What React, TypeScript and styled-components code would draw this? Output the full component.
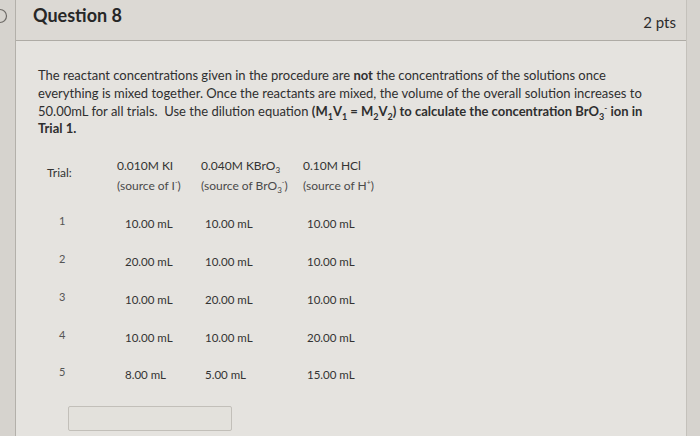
import React from "react";
import styled, { createGlobalStyle } from "styled-components";

const GlobalStyle = createGlobalStyle`
  html, body {
    margin: 0;
    padding: 0;
    background: #d6d3ce;
    font-family: Lato, "Open Sans", sans-serif;
    color: #2e2e2e;
  }
  * {
    box-sizing: border-box;
  }
`;

const Page = styled.div`
  display: flex;
  width: 700px;
  height: 436px;
  overflow: hidden;
`;

const Gutter = styled.div`
  width: 15px;
  flex-shrink: 0;
  padding-top: 8px;
  overflow: hidden;
  svg {
    margin-left: -8px;
    display: block;
  }
`;

const Card = styled.div`
  width: 672px;
  flex-shrink: 0;
  background: #e5e3df;
  border-left: 1px solid #b3b0aa;
  border-right: 1px solid #c4c1bb;
  display: flex;
  flex-direction: column;
`;

const Header = styled.div`
  height: 41px;
  flex-shrink: 0;
  display: flex;
  align-items: center;
  justify-content: space-between;
  padding: 0 10px 0 17px;
  background: #dcd9d4;
  border-bottom: 1px solid #aeaba5;
`;

const Title = styled.h2`
  margin: 0 0 10px;
  font-size: 18px;
  font-weight: 700;
  color: #272727;
`;

const Points = styled.span`
  font-size: 15px;
  margin-top: 4px;
  color: #2c2c2c;
`;

const Body = styled.div`
  flex-shrink: 0;
  padding: 26px 0 0 22px;
`;

const Prompt = styled.p`
  margin: 0;
  width: 620px;
  font-size: 13px;
  line-height: 17.8px;
  color: #2f2f2f;
  sub {
    font-size: 9px;
    line-height: 0;
  }
  sup {
    font-size: 8px;
    line-height: 0;
  }
`;

const Table = styled.div`
  display: grid;
  grid-template-columns: 70px 84px 102px 80px;
  margin: 18px 0 0 9px;
  font-size: 12px;
  color: #333;
  sub {
    font-size: 8px;
    line-height: 0;
  }
  sup {
    font-size: 7px;
    line-height: 0;
  }
`;

const HeadCell = styled.div<{ $top?: number }>`
  line-height: 20px;
  white-space: nowrap;
  padding-top: ${(p) => p.$top ?? 0}px;
`;

const Sub = styled.span`
  display: block;
  line-height: 19px;
  color: #4a4a4a;
`;

const Spacer = styled.div`
  grid-column: 1 / -1;
  height: 19px;
`;

const Cell = styled.div<{ $pad?: number; $num?: boolean }>`
  height: 37.8px;
  line-height: 14px;
  padding-top: ${(p) => (p.$num ? 0 : 3)}px;
  padding-left: ${(p) => p.$pad ?? 0}px;
  font-size: ${(p) => (p.$num ? 11 : 11.5)}px;
  color: ${(p) => (p.$num ? "#555" : "#333")};
  white-space: nowrap;
`;

const AnswerBox = styled.div`
  margin: 3px 0 0 30px;
  width: 164px;
  height: 25px;
  border: 1px solid #c2bfb9;
  border-radius: 2px;
  background: #e3e1dc;
`;

const rows = [
  ["1", "10.00 mL", "10.00 mL", "10.00 mL"],
  ["2", "20.00 mL", "10.00 mL", "10.00 mL"],
  ["3", "10.00 mL", "20.00 mL", "10.00 mL"],
  ["4", "10.00 mL", "10.00 mL", "20.00 mL"],
  ["5", "8.00 mL", "5.00 mL", "15.00 mL"],
];

export default function App() {
  return (
    <>
      <GlobalStyle />
      <Page>
        <Gutter>
          <svg width="16" height="16" viewBox="0 0 16 16">
            <circle cx="8" cy="8" r="6.5" fill="none" stroke="#6d6a66" strokeWidth="1.2" />
          </svg>
        </Gutter>
        <Card>
          <Header>
            <Title>Question 8</Title>
            <Points>2 pts</Points>
          </Header>
          <Body>
            <Prompt>
              The reactant concentrations given in the procedure are <b>not</b> the concentrations of the
              solutions once everything is mixed together. Once the reactants are mixed, the volume of the
              overall solution increases to 50.00mL for all trials.&nbsp; Use the dilution equation{" "}
              <b>
                (M<sub>1</sub>V<sub>1</sub> = M<sub>2</sub>V<sub>2</sub>) to calculate the concentration BrO
                <sub>3</sub>
                <sup>-</sup> ion in Trial 1.
              </b>
            </Prompt>
            <Table>
              <HeadCell $top={7}>Trial:</HeadCell>
              <HeadCell>
                0.010M KI
                <Sub>(source of I<sup>-</sup>)</Sub>
              </HeadCell>
              <HeadCell>
                0.040M KBrO<sub>3</sub>
                <Sub>
                  (source of BrO<sub>3</sub>
                  <sup>-</sup>)
                </Sub>
              </HeadCell>
              <HeadCell>
                0.10M HCl
                <Sub>(source of H<sup>+</sup>)</Sub>
              </HeadCell>
              <Spacer />
              {rows.map((r) => (
                <React.Fragment key={r[0]}>
                  <Cell $num $pad={12}>
                    {r[0]}
                  </Cell>
                  <Cell $pad={8}>{r[1]}</Cell>
                  <Cell $pad={4}>{r[2]}</Cell>
                  <Cell $pad={4}>{r[3]}</Cell>
                </React.Fragment>
              ))}
            </Table>
            <AnswerBox />
          </Body>
        </Card>
      </Page>
    </>
  );
}
